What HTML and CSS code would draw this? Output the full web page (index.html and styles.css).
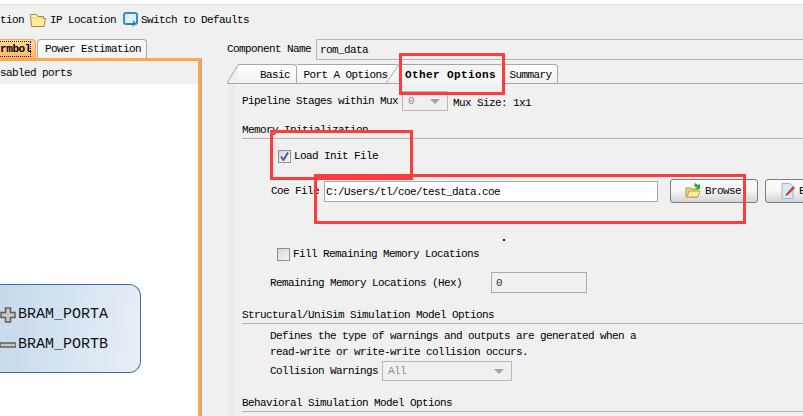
FILE: index.html
```html
<!DOCTYPE html>
<html lang="en">
<head>
<meta charset="utf-8">
<title>Block Memory Generator</title>
<link rel="stylesheet" href="styles.css">
</head>
<body>
<div class="screen">
  <div class="toolbar">
    <span class="tb-cut">tion</span>
    <svg class="tb-folder" width="16" height="16" viewBox="0 0 16 16"><path d="M.5 2.500h6l1.500 2h5.500v2h2l-1.500 8H1.500z" fill="#f7dc84" stroke="#a8893f"/><path d="M1.500 7h13l-1 7h-11z" fill="#fcec9f"/><path d="M1 3h5l1 2H1z" fill="#fff3c0"/></svg>
    <span class="tb-ip">IP Location</span>
    <svg class="tb-switch" width="15" height="15" viewBox="0 0 15 15"><rect x="1" y="1" width="13" height="11" rx="2" fill="#dff0fb" stroke="#2f8fd0" stroke-width="2"/><path d="M4 11h6V8l3 3.500L9.500 15v-2H4z" fill="#2b7fbe"/></svg>
    <span class="tb-switch-label">Switch to Defaults</span>
  </div>
  <div class="main">
    <section class="left">
      <div class="left-tabs">
        <div class="ltab ltab-on"><span class="focus">rmbol</span></div>
        <div class="ltab">Power Estimation</div>
      </div>
      <div class="left-panel">
        <div class="left-head">sabled ports</div>
        <div class="canvas">
          <div class="node">
            <div class="port">
              <svg class="port-icon" width="16" height="16" viewBox="0 0 16 16"><path d="M5.500 1h5v4.500H15v5h-4.500V15h-5v-4.500H1v-5h4.500z" fill="#c8c8c0" stroke="#5f5f58" stroke-width="1.500"/></svg>
              <span>BRAM_PORTA</span>
            </div>
            <div class="port">
              <svg class="port-icon" width="16" height="16" viewBox="0 0 16 16"><rect x="0" y="6" width="16" height="4" fill="#c8c8c0" stroke="#5f5f58" stroke-width="1.500"/></svg>
              <span>BRAM_PORTB</span>
            </div>
          </div>
        </div>
      </div>
    </section>
    <section class="right">
      <div class="name-row">
        <label class="name-label">Component Name</label>
        <div class="name-input">rom_data</div>
      </div>
      <div class="tabs">
        <svg class="tab-slant" width="11" height="20" viewBox="0 0 11 20"><path d="M0 19.500 11 .5" stroke="#a8a8a8" fill="none"/></svg>
        <div class="tab tab-basic">Basic</div>
        <div class="tab tab-port">Port A Options<svg class="port-slant" width="14" height="20" viewBox="0 0 14 20"><path d="M0 19.500 13 .5" stroke="#a8a8a8" fill="none"/></svg></div>
        <div class="tab tab-on">Other Options</div>
        <div class="tab tab-summary">Summary</div>
      </div>
      <div class="content">
        <div class="row pipe-row">
          <span>Pipeline Stages within Mux</span>
          <div class="select select-pipe"><span>0</span><i class="arrow"></i></div>
          <span class="mux-size">Mux Size: 1x1</span>
        </div>
        <div class="heading head-mem">Memory Initialization</div>
        <div class="row check-row">
          <span class="checkbox checked"><svg width="9" height="9" viewBox="0 0 9 9"><path d="M1 4.500 3.500 8 8 .5" fill="none" stroke="#4a5fa8" stroke-width="2"/></svg></span>
          <span>Load Init File</span>
        </div>
        <div class="row coe-row">
          <span class="coe-label">Coe File</span>
          <div class="field coe-input">C:/Users/tl/coe/test_data.coe</div>
          <div class="btn btn-browse">
            <svg width="17" height="16" viewBox="0 0 17 16"><path d="M1 5h5l1 1h6v8H1z" fill="#f4d67c" stroke="#b3963f"/><path d="M2 14l2-6h11l-2 6z" fill="#fbe9a0" stroke="#c0a24c"/><path d="M10 0l3 2 2-1v5h-5l2-1.500L9 3z" fill="#22b02c"/></svg>
            <span>Browse</span>
          </div>
          <div class="btn btn-edit">
            <svg width="15" height="16" viewBox="0 0 15 16"><path d="M1 .5h8l3 3v12H1z" fill="#d7e8f7" stroke="#9db8d2"/><path d="M5 11 12 3l2 2-7 7-3 1z" fill="#c8452e"/></svg>
            <span>Edit</span>
          </div>
        </div>
        <div class="row fill-row">
          <span class="checkbox"></span>
          <span>Fill Remaining Memory Locations</span>
        </div>
        <div class="row remain-row">
          <span class="remain-label">Remaining Memory Locations (Hex)</span>
          <div class="field remain-input">0</div>
        </div>
        <div class="heading head-struct">Structural/UniSim Simulation Model Options</div>
        <p class="desc">Defines the type of warnings and outputs are generated when a<br>read-write or write-write collision occurs.</p>
        <div class="row coll-row">
          <span>Collision Warnings</span>
          <div class="select select-coll"><span>All</span><i class="arrow"></i></div>
        </div>
        <div class="heading head-beh">Behavioral Simulation Model Options</div>
      </div>
    </section>
  </div>
  <i class="speck"></i>
  <div class="mark mark-tab"></div>
  <div class="mark mark-load"></div>
  <div class="mark mark-coe"></div>
</div>
</body>
</html>
```
FILE: styles.css
```css
* { box-sizing: border-box; }
html, body { margin: 0; padding: 0; }
body {
  width: 803px; height: 416px; overflow: hidden;
  background: #f0f0f0; color: #000;
  font: 11px/14px "Liberation Mono", monospace;
  letter-spacing: -.6px;
}
.screen {
  position: relative; width: 803px; height: 416px; overflow: hidden;
  display: flex; flex-direction: column;
  border-top: 4px solid #fff;
}
.toolbar {
  flex: none; height: 35px; display: flex; align-items: center;
  border-top: 1px solid #e4e4e4; padding-bottom: 5px;
}
.tb-cut { width: 30px; }
.tb-folder { margin-right: 4px; }
.tb-ip { width: 73px; }
.tb-switch { margin-right: 3px; }
.main { flex: 1; display: flex; min-height: 0; }
.left { flex: none; width: 201px; display: flex; flex-direction: column; }
.left-tabs { flex: none; height: 19px; display: flex; gap: 1px; }
.ltab {
  height: 19px; padding: 2px 0 0 7px; white-space: nowrap;
  background: linear-gradient(#fff, #f1f1f1);
  border: 1px solid #a8a8a8; border-bottom: 0; border-radius: 4px 4px 0 0;
  width: 110px;
}
.ltab-on {
  width: 36px; padding: 2px 5px 0 0; font-weight: bold; letter-spacing: -.4px;
  background: linear-gradient(#ffd9a0, #ffb760);
  border-color: #ffa64d; border-left: 0; border-radius: 0 4px 0 0;
  text-align: right;
}
.focus { outline: 1px dotted #222; display: block; height: 14px; }
.left-panel {
  flex: 1; min-height: 0; display: flex; flex-direction: column;
  border: solid #ffa64d; border-width: 3px 3px 0 0; position: relative;
  box-shadow: 1px 0 0 #a8a8a8;
}
.left-head { flex: none; height: 23px; padding-top: 5px; }
.canvas { flex: 1; background: #fff; padding-top: 200px; }
.node {
  width: 141px; height: 89px; padding-top: 22px;
  border: 1px solid #3c6fa5; border-left: 0; border-radius: 0 12px 12px 0;
  background: linear-gradient(100deg, #c4d9eb, #e9eff6);
  display: flex; flex-direction: column; gap: 14px;
}
.port {
  display: flex; align-items: center; gap: 2px; height: 16px;
  font-size: 15px; letter-spacing: 0; color: #111;
}
.right { flex: 1; min-width: 0; display: flex; flex-direction: column; padding-left: 26px; }
.name-row { flex: none; height: 25px; display: flex; align-items: flex-start; padding-top: 0; }
.name-label { width: 89px; padding-top: 3px; }
.name-input {
  flex: 1; height: 21px; background: #f0f0f0; border: 1px solid #b5b5b5; border-right: 0;
  padding: 3px 0 0 3px;
}
.tabs {
  flex: none; height: 20px; display: flex; position: relative;
  border-bottom: 1px solid #a8a8a8; padding-left: 11px;
}
.tab-slant { position: absolute; left: 0; top: 0; }
.tab {
  position: relative;
  height: 19px; padding-top: 3px; text-align: center; white-space: nowrap;
  background: linear-gradient(#fff, #f1f1f1);
  border: 1px solid #a8a8a8; border-bottom: 0; border-left: 0;
  border-radius: 0 4px 0 0;
}
.tab-basic { width: 59px; padding-left: 22px; text-align: left; }
.tab-port { width: 103px; border-right: 0; padding-right: 6px; }
.port-slant { position: absolute; right: 0; top: -1px; }
.tab-on {
  width: 103px; height: 20px; font-weight: bold; letter-spacing: .4px; padding-right: 2px;
  background: #f4f4f4; margin-bottom: -1px; border: 0; border-top: 1px solid #a8a8a8;
}
.tab-summary { width: 54px; margin-left: 1px; }
.content {
  flex: 1; min-height: 0; margin-left: 1px; padding: 7px 0 0 14px;
  background: linear-gradient(90deg, #ebebeb, #ebebeb 6px, #f0f0f0 7px);
}
.row { display: flex; align-items: center; white-space: nowrap; }
.pipe-row { height: 20px; }
.select {
  position: relative; height: 20px; border: 1px solid #b9b9b9; background: #f0f0f0;
  color: #8b8b92; padding: 2px 0 0 5px;
}
.select-pipe { width: 46px; margin-left: 4px; }
.mux-size { margin: 4px 0 0 5px; }
.arrow {
  position: absolute; right: 7px; top: 7px;
  border: 5px solid transparent; border-top: 5px solid #a3a3a3; border-bottom: 0;
}
.heading { border-bottom: 1px solid #b5b5b5; white-space: nowrap; height: 15px; line-height: 12px; }
.head-mem { margin-top: 13px; }
.check-row { height: 14px; margin: 10px 0 0 36px; gap: 3px; }
.checkbox {
  flex: none; width: 13px; height: 13px; border: 1px solid #8e8e8e;
  background: linear-gradient(135deg, #d6d6d6, #f8f8f8);
  display: flex; align-items: center; justify-content: center;
}
.coe-row { height: 24px; margin-top: 16px; margin-left: 29px; }
.coe-label { flex: none; width: 53px; }
.field { flex: none; background: #fff; border: 1px solid #ababab; height: 21px; padding: 3px 0 0 1px; }
.coe-input { width: 334px; }
.btn {
  flex: none; height: 24px; display: flex; align-items: center; gap: 3px;
  border: 1px solid #7c7c7c; border-radius: 3px;
  background: linear-gradient(#f8f8f8 45%, #d4d4d4);
}
.btn-browse { width: 88px; margin-left: 12px; padding-left: 14px; }
.btn-edit { width: 80px; margin-left: 7px; padding-left: 15px; }
.fill-row { height: 14px; margin: 44px 0 0 35px; gap: 3px; }
.remain-row { height: 21px; margin: 11px 0 0 28px; }
.remain-label { width: 221px; }
.remain-input { width: 96px; background: #f0f0f0; color: #33333a; padding-left: 4px; }
.head-struct { margin-top: 16px; }
.desc { margin: 4px 0 0 28px; line-height: 16px; white-space: nowrap; }
.coll-row { height: 20px; margin: 1px 0 0 28px; }
.select-coll { width: 130px; margin-left: 4px; }
.head-beh { margin-top: 16px; }
.speck { position: absolute; left: 503px; top: 235px; width: 2px; height: 2px; background: #111; }
.mark { position: absolute; border: 3px solid #ff3c3c; }
.mark-tab { left: 399px; top: 49px; width: 106px; height: 42px; }
.mark-load { left: 270px; top: 126px; width: 143px; height: 50px; }
.mark-coe { left: 314px; top: 170px; width: 432px; height: 50px; }
```
